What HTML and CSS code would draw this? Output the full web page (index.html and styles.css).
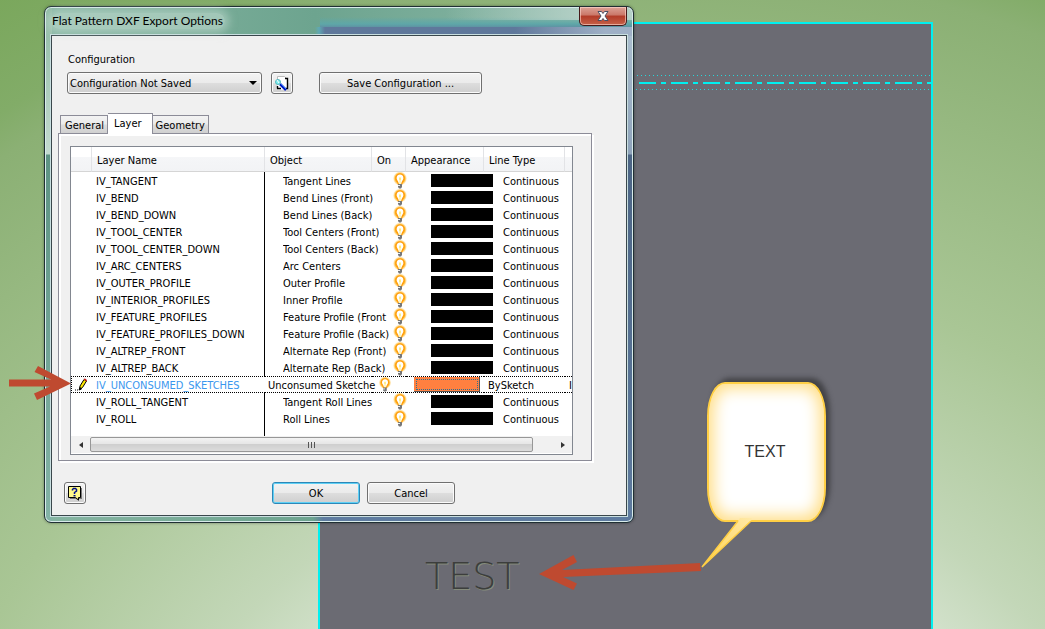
FILE: index.html
```html
<!DOCTYPE html>
<html lang="en">
<head>
    <meta charset="UTF-8">
    <meta name="viewport" content="width=device-width, initial-scale=1.0">
    <title>Flat Pattern DXF Export Options</title>
    <link rel="stylesheet" href="styles.css">
</head>
<body>
    <svg class="symbols" width="0" height="0">
        <radialGradient id="glow">
            <stop offset="0.7" stop-color="#ffb01e"/>
            <stop offset="1" stop-color="#ffdf9a" stop-opacity="0.4"/>
        </radialGradient>
        <symbol id="bulb" viewBox="0 0 14 17">
            <circle cx="7" cy="6.500" r="6.800" fill="url(#glow)"/>
            <path d="M7 2C4.500 2 3 3.800 3 6.200C3 8.200 5 9.500 5.200 12H8.800C9 9.500 11 8.200 11 6.200C11 3.800 9.500 2 7 2Z" fill="#fff" stroke="#ff9d0a" stroke-width="1.200"/>
            <path d="M6 5.500H8V8H6Z" fill="#ffee80"/>
            <path d="M6 8H8V12H6Z" fill="#fff6c0"/>
            <path d="M5 12H9V15L8 16.500H6L5 15Z" fill="#777"/>
            <path d="M5 13.500H7" stroke="#eee"/>
        </symbol>
    </svg>

    <!-- flat pattern in the drawing window -->
    <div class="sheet">
        <svg class="bend" width="100%" height="20">
            <line class="bend-edge" x1="1" y1="1.500" x2="100%" y2="1.500"/>
            <line class="bend-axis" x1="-1" y1="9" x2="100%" y2="9"/>
            <line class="bend-edge" x1="0" y1="15.500" x2="100%" y2="15.500"/>
        </svg>
        <div class="sketch-text">TEST</div>
    </div>

    <div class="dialog">
        <div class="title-bar">
            <span class="title">Flat Pattern DXF Export Options</span>
            <button class="close" aria-label="Close">
                <svg width="12" height="10" viewBox="0 0 12 10">
                    <path d="M1 .5H4.500L6 2.500L7.500 .5H11L8 5L11 9.500H7.500L6 7.500L4.500 9.500H1L4 5Z" fill="#fff" stroke="#4a4f63"/>
                </svg>
            </button>
        </div>

        <div class="client">
            <label class="config-label" for="config">Configuration</label>
            <div class="config-row">
                <div class="select-box">
                    <select id="config">
                        <option>Configuration Not Saved</option>
                    </select>
                </div>
                <button class="btn icon-btn" aria-label="Preview">
                    <svg width="16" height="16" viewBox="0 0 16 16">
                        <path d="M3.500 1.500H10.500L13.500 4.500V14.500H3.500Z" fill="#fff"/>
                        <path d="M3.500 5V1.500H10.500L13.500 4.500" fill="none" stroke="#bbb"/>
                        <path d="M11 3.500H13.500V13.500H12M3 13.500H7M3.500 11V13.500" fill="none" stroke="#000" stroke-width="1.400"/>
                        <path d="M6 9L12 15" stroke="#0018c0" stroke-width="2.500"/>
                        <path d="M7 9L12 14" stroke="#2e7cff"/>
                        <circle cx="4" cy="7" r="2.500" fill="#7ff0f0" stroke="#58b8bc"/>
                        <path d="M3 5L5 8" stroke="#fff"/>
                    </svg>
                </button>
                <button class="btn save-btn">Save Configuration ...</button>
            </div>

            <div class="tabs" role="tablist">
                <button class="tab" role="tab">General</button>
                <button class="tab active" role="tab" aria-selected="true">Layer</button>
                <button class="tab" role="tab">Geometry</button>
            </div>
            <div class="panel">
                <div class="list">
                    <table>
                        <colgroup>
                            <col class="col-mark"><col class="col-name"><col class="col-object"><col class="col-on"><col class="col-look"><col class="col-type"><col>
                        </colgroup>
                        <thead>
                            <tr>
                                <th></th>
                                <th>Layer Name</th>
                                <th>Object</th>
                                <th>On</th>
                                <th>Appearance</th>
                                <th>Line Type</th>
                                <th></th>
                            </tr>
                        </thead>
                        <tbody id="layers"></tbody>
                    </table>
                    <div class="scrollbar">
                        <button class="arrow" aria-label="Scroll left"><svg width="4" height="6"><path d="M4 0V6L0 3Z" fill="#333"/></svg></button>
                        <div class="thumb"><i></i><i></i><i></i></div>
                        <button class="arrow" aria-label="Scroll right"><svg width="4" height="6"><path d="M0 0V6L4 3Z" fill="#333"/></svg></button>
                    </div>
                </div>
            </div>

            <div class="footer">
                <button class="btn icon-btn" aria-label="Help">
                    <svg width="16" height="16" viewBox="0 0 16 16">
                        <path d="M3 3H15V14H12V16L9 14H3Z" fill="#777"/>
                        <path d="M1.500 1.500H13.500V12.500H11.500V15L8.500 12.500H1.500Z" fill="#fff98a" stroke="#000"/>
                        <path d="M5.500 5.500V4.500L6.500 3.500H8.500L9.500 4.500V6L7.500 7.500V9" fill="none" stroke="#00108c" stroke-width="1.500"/>
                        <path d="M6.500 10H8.500V11.500H6.500Z" fill="#00108c"/>
                    </svg>
                </button>
                <button class="btn ok">OK</button>
                <button class="btn">Cancel</button>
            </div>
        </div>
    </div>

    <!-- markup on top of the drawing -->
    <div class="callout">TEXT</div>
    <svg class="markup" width="1045" height="629">
        <defs>
            <linearGradient id="tail" x1="0" y1="1" x2="1" y2="0">
                <stop offset="0" stop-color="#ffd24a"/>
                <stop offset="1" stop-color="#ffe9a8"/>
            </linearGradient>
        </defs>
        <path d="M738 521L702 567L751 521L752 518H740Z" fill="url(#tail)"/>
        <path d="M738 521L702 567L751 521" fill="none" stroke="#ffcf45" stroke-width="1.500"/>
        <path class="pointer" d="M9 379.500H51L34.500 372L38 366L71 383.500L37 400L34 393.500L50 386.500H9Z"/>
        <path class="pointer" d="M539 574L573.500 555L577 562L562 570L700 563L701 571L563 577L577 583.500L573.500 590Z"/>
    </svg>

    <script>
        const layers = [
            ['IV_TANGENT', 'Tangent Lines'],
            ['IV_BEND', 'Bend Lines (Front)'],
            ['IV_BEND_DOWN', 'Bend Lines (Back)'],
            ['IV_TOOL_CENTER', 'Tool Centers (Front)'],
            ['IV_TOOL_CENTER_DOWN', 'Tool Centers (Back)'],
            ['IV_ARC_CENTERS', 'Arc Centers'],
            ['IV_OUTER_PROFILE', 'Outer Profile'],
            ['IV_INTERIOR_PROFILES', 'Inner Profile'],
            ['IV_FEATURE_PROFILES', 'Feature Profile (Front'],
            ['IV_FEATURE_PROFILES_DOWN', 'Feature Profile (Back)'],
            ['IV_ALTREP_FRONT', 'Alternate Rep (Front)'],
            ['IV_ALTREP_BACK', 'Alternate Rep (Back)'],
            ['IV_UNCONSUMED_SKETCHES', 'Unconsumed Sketche', 'BySketch'],
            ['IV_ROLL_TANGENT', 'Tangent Roll Lines'],
            ['IV_ROLL', 'Roll Lines']
        ];

        const pencil = `<svg class="pencil" width="14" height="13" viewBox="0 0 14 13">
            <path d="M5.500 11.500L6 8L10 1.500L12.500 3L8.500 9.500Z" fill="#ffe800" stroke="#000"/>
            <path d="M9.500 1L11 .5L13 2L12.500 3.500Z" fill="#d01818"/>
            <path d="M1 12H2M3 12H4M5 12L6 9.500L7.500 11Z" fill="#000" stroke="#000"/>
        </svg>`;

        document.getElementById('layers').innerHTML = layers.map(([name, object, type]) => `
            <tr class="${type ? 'selected' : ''}">
                <td>${type ? pencil : ''}</td>
                <td class="name">${name}</td>
                <td class="object"><div>${object}</div></td>
                <td class="on"><svg width="14" height="17"><use href="#bulb"/></svg></td>
                <td class="look"><button class="swatch" aria-label="Color of ${name}"></button></td>
                <td class="type">${type || 'Continuous'}</td>
                <td class="more"><div>${type ? 'I' : ''}</div></td>
            </tr>`).join('') + '<tr class="filler"><td></td><td class="name"></td><td colspan="5"></td></tr>';
    </script>
</body>
</html>
```

FILE: styles.css
```css
* {
    box-sizing: border-box;
}
body {
    margin: 0;
    height: 100vh;
    overflow: hidden;
    position: relative;
    font-family: "DejaVu Sans Condensed", "DejaVu Sans", sans-serif;
    font-size: 11px;
    color: #000;
    background: radial-gradient(ellipse 96% 143% at 61% 143%, #d2e1cb 42%, #c3d7b8 50%, #a9c695 71%, #8bb074 104%, #82ac68 108%, #7aa75c 119%);
}
button, select {
    font: inherit;
    color: inherit;
}
.symbols {
    position: absolute;
}

/* drawing */
.sheet {
    position: absolute;
    left: 318px;
    right: 112px;
    top: 22px;
    bottom: 0;
    background: #6b6b73;
    border: 2px solid #00f0f0;
    border-bottom: none;
}
.bend {
    display: block;
    margin-top: 50px;
}
.bend-edge {
    stroke: #26d8dc;
    stroke-dasharray: 1 3;
}
.bend-axis {
    stroke: #00f0f0;
    stroke-width: 2;
    stroke-dasharray: 17 5 5 5;
}
.sketch-text {
    position: absolute;
    left: 105px;
    bottom: 29px;
    font-family: "DejaVu Sans Light", "DejaVu Sans", sans-serif;
    font-weight: 200;
    font-size: 38px;
    line-height: 48px;
    color: #3c3e3c;
    text-shadow: 1px 1px 0 #868c7c;
}
.callout {
    position: absolute;
    left: 707px;
    top: 382px;
    width: 119px;
    height: 140px;
    padding-right: 3px;
    display: flex;
    align-items: center;
    justify-content: center;
    font-family: "Liberation Sans", Arial, sans-serif;
    font-size: 16px;
    color: #333;
    background: #fff;
    border: 2px solid #ffcf45;
    border-radius: 18px / 34px;
    box-shadow: inset 0 0 16px 4px #ffdc80, 4px -4px 5px rgba(40, 40, 42, 0.6);
}
.markup {
    position: absolute;
    left: 0;
    top: 0;
    pointer-events: none;
}
.pointer {
    fill: #bf4a30;
}

/* window frame */
.dialog {
    position: absolute;
    left: 44px;
    top: 6px;
    width: 590px;
    padding: 0 6px 6px;
    border: 1px solid #1f2f33;
    border-radius: 7px;
    background:
        linear-gradient(90deg, transparent 270px, #5fa9b4 274px, #5f789b 280px, #5f789b 470px, #9fb0c6 560px) 0 20px / 100% 9px no-repeat,
        linear-gradient(90deg, transparent 400px, rgba(190, 214, 206, 0.8) 540px) 0 0 / 100% 13px no-repeat,
        linear-gradient(transparent 10px, #5ea7a8 17px, #5f86a0 22px) 275px 0 / 100% 22px no-repeat,
        linear-gradient(#a9bccd, #8ea3ba 118px, #4c6585 119px, #5f7ca0) right 29px / 7px 100% no-repeat,
        linear-gradient(90deg, transparent 268px, #5f7ca0 278px) 0 100% / 100% 8px no-repeat,
        linear-gradient(#8fbaa4, #c3dacf 147px, #5d9383 148px, #83b3a6) 0 0 / 7px 100% no-repeat,
        linear-gradient(90deg, #86b5a2, #6da48f 270px, #8fbbab);
    box-shadow: inset 0 0 0 1px #d8ebea, 0 0 3px rgba(0, 0, 0, 0.4);
}
.title-bar {
    display: flex;
    justify-content: space-between;
    align-items: flex-start;
    height: 28px;
}
.title {
    padding: 0 2px 0 1px;
    margin-top: 6px;
    font-family: Lato, "Open Sans", sans-serif;
    font-size: 12px;
    line-height: 16px;
    border-radius: 8px;
    background: rgba(205, 228, 218, 0.5);
    box-shadow: 0 0 8px 4px rgba(205, 228, 218, 0.5);
}
.close {
    display: flex;
    align-items: center;
    justify-content: center;
    width: 48px;
    height: 19px;
    padding: 0;
    border: 1px solid #46191a;
    border-top: none;
    border-radius: 0 0 5px 5px;
    background: linear-gradient(#dda397, #ca7768 45%, #b23b28 50%, #c66148);
    box-shadow: inset 0 0 0 1px rgba(255, 220, 210, 0.6);
}
.client {
    background: #f0f0f0;
    border: 1px solid #3a474c;
    box-shadow: 0 0 0 1px #c9dfe0;
    padding: 16px 34px 11px 6px;
}

/* controls */
.config-label {
    display: block;
    margin-left: 10px;
    line-height: 16px;
}
.config-row {
    display: flex;
    align-items: center;
    margin: 4px 0 19px 9px;
}
.select-box {
    position: relative;
    width: 195px;
}
.select-box::after {
    content: "";
    position: absolute;
    right: 5px;
    top: 9px;
    border: 4px solid transparent;
    border-top-color: #000;
    border-bottom: none;
    pointer-events: none;
}
select, .btn {
    height: 22px;
    border: 1px solid #707070;
    border-radius: 3px;
    background: linear-gradient(#f3f3f3, #ebebeb 48%, #dddddd 52%, #cfcfcf);
    box-shadow: inset 0 0 0 1px #fbfbfb;
}
select {
    display: block;
    width: 100%;
    padding: 0 16px 0 2px;
    appearance: none;
}
.btn {
    width: 88px;
    padding: 0;
}
.icon-btn {
    display: flex;
    align-items: center;
    justify-content: center;
    width: 22px;
}
.config-row .icon-btn {
    margin: 0 26px 0 9px;
}
.save-btn {
    width: 163px;
}
.tabs {
    display: flex;
    align-items: flex-end;
    padding-left: 2px;
}
.tab {
    height: 18px;
    padding: 1px 3px 0;
    border: 1px solid #8c8c98;
    border-bottom: none;
    border-left: none;
    background: linear-gradient(#f3f3f3, #ebebeb 48%, #dddddd 52%, #d0d0d0);
}
.tab:first-child {
    border-left: 1px solid #8c8c98;
    padding-left: 4px;
}
.tab.active {
    height: 21px;
    padding: 0 10px 1px 6px;
    margin-bottom: -1px;
    background: #fff;
    position: relative;
}
.panel {
    padding: 12px 18px 5px 11px;
    border: 1px solid #8c8c98;
    box-shadow: inset 2px 2px 0 #fff, 2px 2px 0 #fff;
}
.list {
    border: 1px solid #828790;
    background: #fff;
    padding-bottom: 1px;
}

/* layer table */
table {
    width: 100%;
    table-layout: fixed;
    border-spacing: 0;
}
.col-mark { width: 21px; }
.col-name { width: 173px; }
.col-object { width: 107px; }
.col-on { width: 34px; }
.col-look { width: 78px; }
.col-type { width: 81px; }
th {
    height: 25px;
    padding: 2px 0 0 5px;
    font-weight: normal;
    text-align: left;
    background: linear-gradient(#fff 40%, #f5f6f8 41%, #f2f3f5);
    border-right: 1px solid #e2e3e6;
    border-bottom: 1px solid #d5d5d5;
}
th:last-child {
    border-right: none;
}
td {
    height: 17px;
    padding: 0;
    line-height: 15px;
    white-space: nowrap;
}
td svg {
    display: block;
}
.name, .object, .type, .more {
    padding-top: 2px;
}
.name {
    padding-left: 4px;
    border-right: 1px solid #000;
}
.object div {
    width: 106px;
    margin-left: 18px;
    overflow: hidden;
}
.on {
    padding-left: 21px;
}
.look {
    padding-left: 25px;
}
.swatch {
    display: block;
    width: 62px;
    height: 13px;
    padding: 0;
    border: none;
    background: #000;
}
.type {
    padding-left: 19px;
}
.selected td {
    line-height: 13px;
    border-top: 1px dotted #000;
    border-bottom: 1px dotted #000;
}
.selected td:first-child {
    border-left: 1px dotted #000;
}
.pencil {
    margin-left: 2px;
}
.selected .name {
    color: #3a97ee;
    border-right: none;
}
.selected .object div {
    width: auto;
    margin-left: 3px;
    overflow: visible;
}
.selected .on {
    padding-left: 6px;
}
.selected .on svg {
    height: 15px;
}
.selected .look {
    padding-left: 8px;
}
.selected .swatch {
    width: 66px;
    height: 15px;
    background: #ff8040;
    border-right: 1px solid #555;
    border-bottom: 1px solid #555;
    outline: 1px dotted #2f6f8f;
    outline-offset: -3px;
}
.selected .type {
    padding-left: 4px;
}
.more div {
    padding-left: 4px;
}
.filler td {
    height: 9px;
    line-height: 7px;
}
.scrollbar {
    display: flex;
    height: 17px;
    background: #f1f1f1;
}
.arrow {
    display: flex;
    align-items: center;
    justify-content: center;
    width: 19px;
    padding: 0;
    border: none;
    background: none;
}
.thumb {
    display: flex;
    align-items: center;
    justify-content: center;
    gap: 2px;
    flex: 1;
    margin: 1px 20px 1px 0;
    border: 1px solid #979797;
    border-radius: 2px;
    background: linear-gradient(#f3f3f3, #e6e6e6 45%, #cfcfcf 50%, #dcdcdc);
}
.thumb i {
    width: 1px;
    height: 6px;
    background: #555;
}
.footer {
    display: flex;
    gap: 7px;
    margin: 21px 0 0 6px;
}
.footer .icon-btn {
    margin-right: 179px;
}
.ok {
    border-color: #2c88b8;
    box-shadow: inset 0 0 0 1px #5fd0f5;
}
```
